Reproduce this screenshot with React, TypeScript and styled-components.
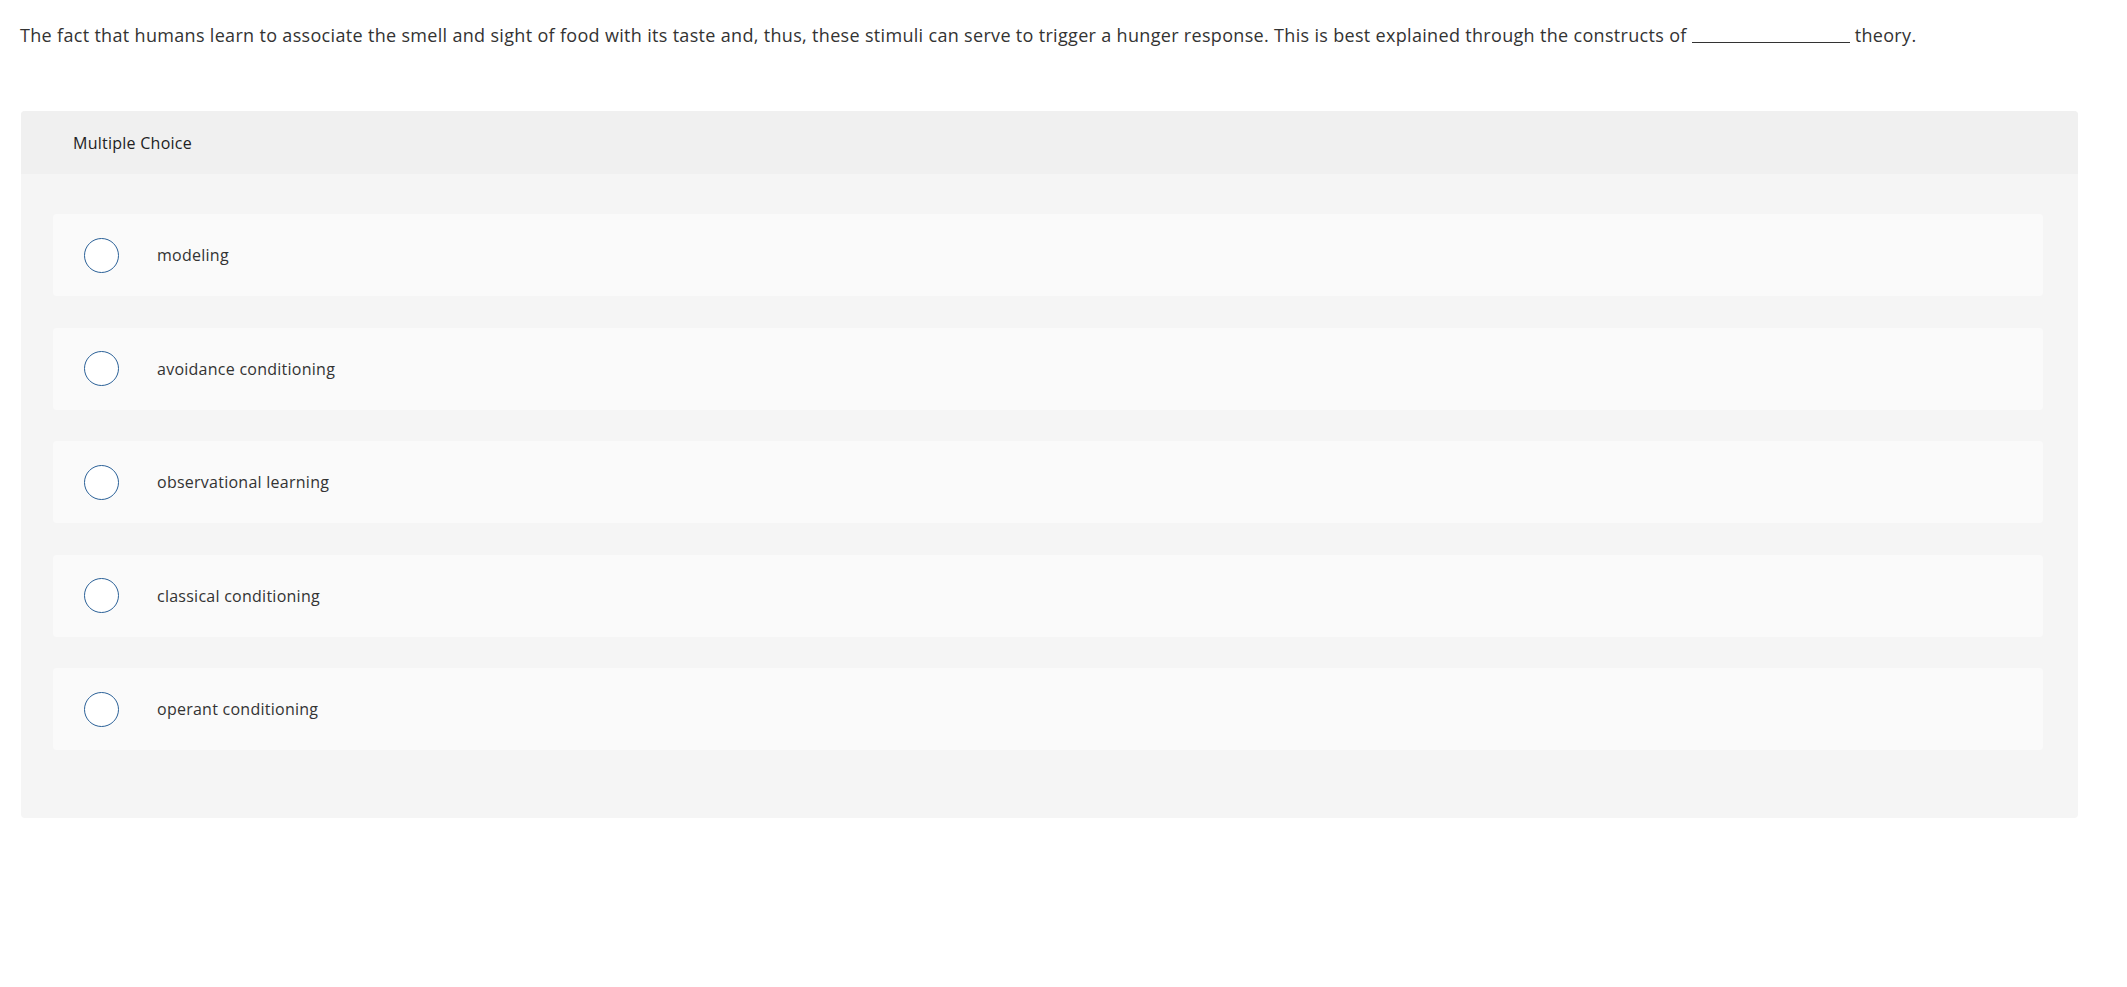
import React from "react";
import styled, { createGlobalStyle } from "styled-components";

const GlobalStyle = createGlobalStyle`
  html, body {
    margin: 0;
    padding: 0;
    background: #ffffff;
  }
  body {
    font-family: "Open Sans", Lato, "Liberation Sans", sans-serif;
    color: #333333;
    letter-spacing: 0.016em;
  }
`;

const Page = styled.div`
  padding: 23px 49px 0 21px;
`;

const Question = styled.p`
  margin: 0 0 0 -1px;
  font-size: 18px;
  line-height: 24px;
  letter-spacing: 0.32px;
  color: #333333;
`;

const Blank = styled.span`
  display: inline-block;
  width: 158px;
  height: 1px;
  border-bottom: 1px solid #333333;
  vertical-align: -1px;
`;

const Panel = styled.section`
  margin-top: 64px;
  background: #f5f5f5;
  border-radius: 4px;
`;

const PanelHeader = styled.div`
  display: flex;
  align-items: center;
  height: 63px;
  padding-left: 52px;
  background: #f0f0f0;
  border-radius: 4px 4px 0 0;
  font-size: 16px;
  color: #222222;
`;

const Choices = styled.div`
  display: flex;
  flex-direction: column;
  gap: 31.5px;
  padding: 40px 35px 68px 32px;
`;

const Choice = styled.label`
  display: flex;
  align-items: center;
  height: 82px;
  padding-left: 31px;
  background: #fafafa;
  border-radius: 4px;
  cursor: pointer;
`;

const Radio = styled.span`
  flex: none;
  box-sizing: border-box;
  width: 35px;
  height: 35px;
  border: 1.5px solid #2b6198;
  border-radius: 50%;
  background: #ffffff;
`;

const ChoiceText = styled.span`
  margin-left: 38px;
  font-size: 16px;
  color: #333333;
`;

const choices = [
  "modeling",
  "avoidance conditioning",
  "observational learning",
  "classical conditioning",
  "operant conditioning",
];

export default function App() {
  return (
    <>
      <GlobalStyle />
      <Page>
        <Question>
          The fact that humans learn to associate the smell and sight of food
          with its taste and, thus, these stimuli can serve to trigger a hunger
          response. This is best explained through the constructs of{" "}
          <Blank /> theory.
        </Question>
        <Panel>
          <PanelHeader>Multiple Choice</PanelHeader>
          <Choices>
            {choices.map((c) => (
              <Choice key={c}>
                <Radio />
                <ChoiceText>{c}</ChoiceText>
              </Choice>
            ))}
          </Choices>
        </Panel>
      </Page>
    </>
  );
}
